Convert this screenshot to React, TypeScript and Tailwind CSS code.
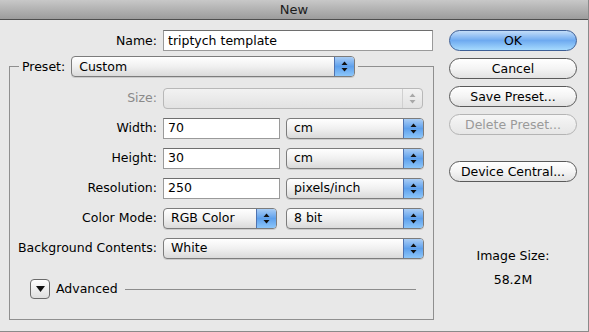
import React from 'react';

const font = { fontFamily: '"DejaVu Sans", "Liberation Sans", sans-serif' };

function Arrows({ disabled }: { disabled?: boolean }) {
  const c = disabled ? '#a8a8a8' : '#111';
  return (
    <svg width="7" height="11" viewBox="0 0 7 11">
      <path d="M3.5 0.5 L6.5 4 L0.5 4 Z" fill={c} />
      <path d="M0.5 7 L6.5 7 L3.5 10.5 Z" fill={c} />
    </svg>
  );
}

function Popup({ value, width, disabled }: { value: string; width: string; disabled?: boolean }) {
  return (
    <div
      className={`${width} h-[21px] flex items-stretch rounded-[4px] border overflow-hidden ${
        disabled
          ? 'border-[#b8b8b8] bg-gradient-to-b from-[#f2f2f2] to-[#e2e2e2]'
          : 'border-[#7c7c7c] bg-gradient-to-b from-[#ffffff] via-[#f0f0f0] to-[#dadada] shadow-[0_1px_0_rgba(0,0,0,0.12)]'
      }`}
    >
      <div className="flex-1 flex items-center pl-[7px] text-black">{value}</div>
      <div
        className={`w-[20px] flex items-center justify-center ${
          disabled
            ? 'border-l border-[#d0d0d0]'
            : 'border-l border-[#4f73b0] bg-gradient-to-b from-[#a9cdf5] via-[#5ea0ec] to-[#8cc6fa]'
        }`}
      >
        <Arrows disabled={disabled} />
      </div>
    </div>
  );
}

function Field({ value, width }: { value: string; width: string }) {
  return (
    <div className={`${width} h-[21px] flex items-center bg-white border border-[#9a9a9a] border-t-[#6e6e6e] pl-[4px] text-black`}>
      {value}
    </div>
  );
}

function Row({ label, children, muted }: { label: string; children: React.ReactNode; muted?: boolean }) {
  return (
    <div className="h-[30px] flex items-center gap-[6px]">
      <div className={`w-[147px] text-right ${muted ? 'text-[#8a8a8a]' : 'text-black'}`}>{label}</div>
      {children}
    </div>
  );
}

function Button({ label, primary, disabled }: { label: string; primary?: boolean; disabled?: boolean }) {
  return (
    <div
      className={`w-[128px] h-[21px] rounded-full border flex items-center justify-center ${
        primary
          ? 'border-[#3d5f96] bg-gradient-to-b from-[#c3ddf8] via-[#6eaaf0] to-[#a6dafd] text-black'
          : disabled
          ? 'border-[#b4b4b4] bg-gradient-to-b from-[#f6f6f6] to-[#e6e6e6] text-[#9a9a9a]'
          : 'border-[#5a5a5a] bg-gradient-to-b from-[#ffffff] via-[#f4f4f4] to-[#e2e2e2] text-black'
      }`}
    >
      {label}
    </div>
  );
}

export default function App() {
  return (
    <div style={font} className="w-[589px] h-[332px] bg-[#e8e8e8] text-[12.5px] leading-[18px] border-r border-b border-[#8a8a8a] overflow-hidden">
      <div className="h-[20px] bg-gradient-to-b from-[#c8c8c8] to-[#9c9c9c] border-b border-[#4e4e4e] flex items-center justify-center text-[13px] text-[#1c1c1c]">
        New
      </div>

      <div className="flex pl-[9px] pt-[10px]">
        <div className="w-[425px]">
          <div className="flex items-center gap-[6px]">
            <div className="w-[148px] text-right text-black">Name:</div>
            <Field value="triptych template" width="w-[270px]" />
          </div>

          <fieldset className="mt-[5px] border border-[#8f8f8f] pt-[6px] pb-[15px]">
            <legend className="ml-[9px] px-[3px] flex items-center gap-[6px]">
              <span className="text-black">Preset:</span>
              <Popup value="Custom" width="w-[284px]" />
            </legend>
            <Row label="Size:" muted>
              <Popup value="" width="w-[260px]" disabled />
            </Row>
            <Row label="Width:">
              <Field value="70" width="w-[117px]" />
              <Popup value="cm" width="w-[138px]" />
            </Row>
            <Row label="Height:">
              <Field value="30" width="w-[117px]" />
              <Popup value="cm" width="w-[138px]" />
            </Row>
            <Row label="Resolution:">
              <Field value="250" width="w-[117px]" />
              <Popup value="pixels/inch" width="w-[138px]" />
            </Row>
            <Row label="Color Mode:">
              <Popup value="RGB Color" width="w-[114px]" />
              <div className="ml-[3px]">
                <Popup value="8 bit" width="w-[138px]" />
              </div>
            </Row>
            <Row label="Background Contents:">
              <Popup value="White" width="w-[261px]" />
            </Row>
            <div className="mt-[11px] h-[30px] flex items-center pl-[20px]">
              <div className="w-[20px] h-[20px] rounded-[4px] border border-[#6a6a6a] bg-gradient-to-b from-white to-[#dedede] flex items-center justify-center">
                <svg width="9" height="6" viewBox="0 0 9 6">
                  <path d="M0 0 L9 0 L4.5 6 Z" fill="#111" />
                </svg>
              </div>
              <span className="ml-[6px] text-black">Advanced</span>
              <div className="ml-[7px] w-[291px] h-px bg-[#8c8c8c]" />
            </div>
          </fieldset>
        </div>

        <div className="ml-[15px] w-[128px] flex flex-col">
          <div className="flex flex-col gap-[7px]">
            <Button label="OK" primary />
            <Button label="Cancel" />
            <Button label="Save Preset..." />
            <Button label="Delete Preset..." disabled />
          </div>
          <div className="mt-[26px]">
            <Button label="Device Central..." />
          </div>
          <div className="mt-[65px] flex flex-col items-center text-black">
            <div>Image Size:</div>
            <div className="mt-[6px]">58.2M</div>
          </div>
        </div>
      </div>
    </div>
  );
}
